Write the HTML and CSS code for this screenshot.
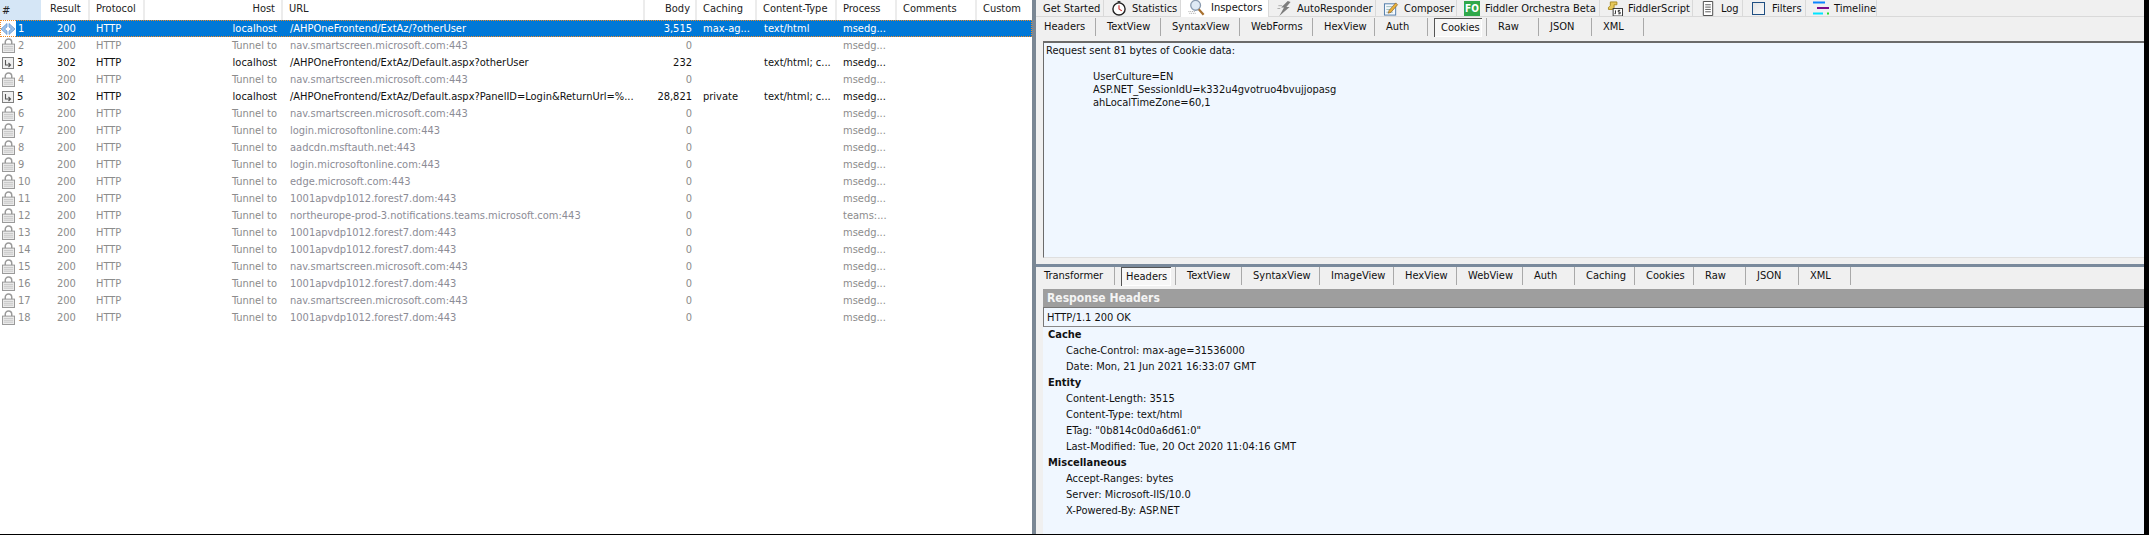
FILE: index.html
```html
<!DOCTYPE html>
<html lang="en">
<head>
<meta charset="utf-8">
<title>Fiddler</title>
<link rel="stylesheet" href="styles.css">
</head>
<body>
<svg class="defs" width="0" height="0" aria-hidden="true">
  <defs>
    <symbol id="lock" viewBox="0 0 14 16">
      <path d="M3.500 7V4.500C3.500 2.500 5 1 7 1s3.500 1.500 3.500 3.500V7" fill="none" stroke="#9a9a9a" stroke-width="1.600"/>
      <rect x=".5" y="6.500" width="13" height="9" fill="#ececec" stroke="#939393"/>
      <path d="M2 9h10M2 11h10M2 13h10" stroke="#c4c4c4"/>
    </symbol>
    <symbol id="redir" viewBox="0 0 12 12">
      <rect x=".5" y=".5" width="11" height="11" fill="#f0f0f0" stroke="#808080"/>
      <path d="M3.500 3v5h5M6.500 6l2 2-2 2" fill="none" stroke="#555" stroke-width="1.100"/>
    </symbol>
  </defs>
</svg>
<div class="app">
  <section class="sessions">
    <div class="row head">
      <div class="c num">#</div><div class="c res">Result</div><div class="c pro">Protocol</div><div class="c hos">Host</div><div class="c url">URL</div><div class="c bod">Body</div><div class="c cac">Caching</div><div class="c typ">Content-Type</div><div class="c prc">Process</div><div class="c com">Comments</div><div class="c cus">Custom</div>
    </div>
    <div class="row sel">
      <div class="c num"><svg class="ic-arrows" viewBox="0 0 16 12"><path d="M7 .5 1 6l6 5.500V8L4.500 6 7 4z" fill="#9fc3ea" stroke="#5a8fd0" stroke-width=".7"/><path d="M9 .5 15 6l-6 5.500V8l2.500-2L9 4z" fill="#9fc3ea" stroke="#5a8fd0" stroke-width=".7"/></svg><span>1</span></div><div class="c res">200</div><div class="c pro">HTTP</div><div class="c hos">localhost</div><div class="c url">/AHPOneFrontend/ExtAz/?otherUser</div><div class="c bod">3,515</div><div class="c cac">max-ag...</div><div class="c typ">text/html</div><div class="c prc">msedg...</div><div class="c com"></div><div class="c cus"></div>
    </div>
    <div class="row tun"><div class="c num"><svg class="ic-lock"><use href="#lock"/></svg><span>2</span></div><div class="c res">200</div><div class="c pro">HTTP</div><div class="c hos">Tunnel to</div><div class="c url">nav.smartscreen.microsoft.com:443</div><div class="c bod">0</div><div class="c cac"></div><div class="c typ"></div><div class="c prc">msedg...</div><div class="c com"></div><div class="c cus"></div></div>
    <div class="row"><div class="c num"><svg class="ic-redir"><use href="#redir"/></svg><span>3</span></div><div class="c res">302</div><div class="c pro">HTTP</div><div class="c hos">localhost</div><div class="c url">/AHPOneFrontend/ExtAz/Default.aspx?otherUser</div><div class="c bod">232</div><div class="c cac"></div><div class="c typ">text/html; c...</div><div class="c prc">msedg...</div><div class="c com"></div><div class="c cus"></div></div>
    <div class="row tun"><div class="c num"><svg class="ic-lock"><use href="#lock"/></svg><span>4</span></div><div class="c res">200</div><div class="c pro">HTTP</div><div class="c hos">Tunnel to</div><div class="c url">nav.smartscreen.microsoft.com:443</div><div class="c bod">0</div><div class="c cac"></div><div class="c typ"></div><div class="c prc">msedg...</div><div class="c com"></div><div class="c cus"></div></div>
    <div class="row"><div class="c num"><svg class="ic-redir"><use href="#redir"/></svg><span>5</span></div><div class="c res">302</div><div class="c pro">HTTP</div><div class="c hos">localhost</div><div class="c url">/AHPOneFrontend/ExtAz/Default.aspx?PanelID=Login&amp;ReturnUrl=%...</div><div class="c bod">28,821</div><div class="c cac">private</div><div class="c typ">text/html; c...</div><div class="c prc">msedg...</div><div class="c com"></div><div class="c cus"></div></div>
    <div class="row tun"><div class="c num"><svg class="ic-lock"><use href="#lock"/></svg><span>6</span></div><div class="c res">200</div><div class="c pro">HTTP</div><div class="c hos">Tunnel to</div><div class="c url">nav.smartscreen.microsoft.com:443</div><div class="c bod">0</div><div class="c cac"></div><div class="c typ"></div><div class="c prc">msedg...</div><div class="c com"></div><div class="c cus"></div></div>
    <div class="row tun"><div class="c num"><svg class="ic-lock"><use href="#lock"/></svg><span>7</span></div><div class="c res">200</div><div class="c pro">HTTP</div><div class="c hos">Tunnel to</div><div class="c url">login.microsoftonline.com:443</div><div class="c bod">0</div><div class="c cac"></div><div class="c typ"></div><div class="c prc">msedg...</div><div class="c com"></div><div class="c cus"></div></div>
    <div class="row tun"><div class="c num"><svg class="ic-lock"><use href="#lock"/></svg><span>8</span></div><div class="c res">200</div><div class="c pro">HTTP</div><div class="c hos">Tunnel to</div><div class="c url">aadcdn.msftauth.net:443</div><div class="c bod">0</div><div class="c cac"></div><div class="c typ"></div><div class="c prc">msedg...</div><div class="c com"></div><div class="c cus"></div></div>
    <div class="row tun"><div class="c num"><svg class="ic-lock"><use href="#lock"/></svg><span>9</span></div><div class="c res">200</div><div class="c pro">HTTP</div><div class="c hos">Tunnel to</div><div class="c url">login.microsoftonline.com:443</div><div class="c bod">0</div><div class="c cac"></div><div class="c typ"></div><div class="c prc">msedg...</div><div class="c com"></div><div class="c cus"></div></div>
    <div class="row tun"><div class="c num"><svg class="ic-lock"><use href="#lock"/></svg><span>10</span></div><div class="c res">200</div><div class="c pro">HTTP</div><div class="c hos">Tunnel to</div><div class="c url">edge.microsoft.com:443</div><div class="c bod">0</div><div class="c cac"></div><div class="c typ"></div><div class="c prc">msedg...</div><div class="c com"></div><div class="c cus"></div></div>
    <div class="row tun"><div class="c num"><svg class="ic-lock"><use href="#lock"/></svg><span>11</span></div><div class="c res">200</div><div class="c pro">HTTP</div><div class="c hos">Tunnel to</div><div class="c url">1001apvdp1012.forest7.dom:443</div><div class="c bod">0</div><div class="c cac"></div><div class="c typ"></div><div class="c prc">msedg...</div><div class="c com"></div><div class="c cus"></div></div>
    <div class="row tun"><div class="c num"><svg class="ic-lock"><use href="#lock"/></svg><span>12</span></div><div class="c res">200</div><div class="c pro">HTTP</div><div class="c hos">Tunnel to</div><div class="c url">northeurope-prod-3.notifications.teams.microsoft.com:443</div><div class="c bod">0</div><div class="c cac"></div><div class="c typ"></div><div class="c prc">teams:...</div><div class="c com"></div><div class="c cus"></div></div>
    <div class="row tun"><div class="c num"><svg class="ic-lock"><use href="#lock"/></svg><span>13</span></div><div class="c res">200</div><div class="c pro">HTTP</div><div class="c hos">Tunnel to</div><div class="c url">1001apvdp1012.forest7.dom:443</div><div class="c bod">0</div><div class="c cac"></div><div class="c typ"></div><div class="c prc">msedg...</div><div class="c com"></div><div class="c cus"></div></div>
    <div class="row tun"><div class="c num"><svg class="ic-lock"><use href="#lock"/></svg><span>14</span></div><div class="c res">200</div><div class="c pro">HTTP</div><div class="c hos">Tunnel to</div><div class="c url">1001apvdp1012.forest7.dom:443</div><div class="c bod">0</div><div class="c cac"></div><div class="c typ"></div><div class="c prc">msedg...</div><div class="c com"></div><div class="c cus"></div></div>
    <div class="row tun"><div class="c num"><svg class="ic-lock"><use href="#lock"/></svg><span>15</span></div><div class="c res">200</div><div class="c pro">HTTP</div><div class="c hos">Tunnel to</div><div class="c url">nav.smartscreen.microsoft.com:443</div><div class="c bod">0</div><div class="c cac"></div><div class="c typ"></div><div class="c prc">msedg...</div><div class="c com"></div><div class="c cus"></div></div>
    <div class="row tun"><div class="c num"><svg class="ic-lock"><use href="#lock"/></svg><span>16</span></div><div class="c res">200</div><div class="c pro">HTTP</div><div class="c hos">Tunnel to</div><div class="c url">1001apvdp1012.forest7.dom:443</div><div class="c bod">0</div><div class="c cac"></div><div class="c typ"></div><div class="c prc">msedg...</div><div class="c com"></div><div class="c cus"></div></div>
    <div class="row tun"><div class="c num"><svg class="ic-lock"><use href="#lock"/></svg><span>17</span></div><div class="c res">200</div><div class="c pro">HTTP</div><div class="c hos">Tunnel to</div><div class="c url">nav.smartscreen.microsoft.com:443</div><div class="c bod">0</div><div class="c cac"></div><div class="c typ"></div><div class="c prc">msedg...</div><div class="c com"></div><div class="c cus"></div></div>
    <div class="row tun"><div class="c num"><svg class="ic-lock"><use href="#lock"/></svg><span>18</span></div><div class="c res">200</div><div class="c pro">HTTP</div><div class="c hos">Tunnel to</div><div class="c url">1001apvdp1012.forest7.dom:443</div><div class="c bod">0</div><div class="c cac"></div><div class="c typ"></div><div class="c prc">msedg...</div><div class="c com"></div><div class="c cus"></div></div>
  </section>
  <div class="vsplit"></div>
  <section class="inspect">
    <nav class="maintabs">
      <div class="mt">Get Started</div>
      <div class="mt"><svg class="mi" viewBox="0 0 16 16"><circle cx="8" cy="8.500" r="6.500" fill="#fff" stroke="#222" stroke-width="1.500"/><path d="M8 4.500v4l3 2" fill="none" stroke="#c33" stroke-width="1.200"/><rect x="6.500" y="0" width="3" height="2" fill="#333"/></svg>Statistics</div>
      <div class="mt on"><svg class="mi big" viewBox="0 0 18 18"><circle cx="8" cy="6" r="5.500" fill="#dfeaf5" stroke="#8a9bb0" stroke-width="1.500"/><path d="M11.500 10.500l5.500 6" stroke="#a8702f" stroke-width="2.500"/><path d="M0 13h8M1 15h7" stroke="#999" stroke-dasharray="1 1"/></svg>Inspectors</div>
      <div class="mt"><svg class="mi" viewBox="0 0 16 16"><path d="M12 0 5 7h3l-5 9 11-9.500h-3.500L15 1z" fill="#7d7d7d"/><path d="M2 5h4M1 8h3" stroke="#aaa"/></svg>AutoResponder</div>
      <div class="mt"><svg class="mi" viewBox="0 0 16 16"><rect x="1" y="3" width="12" height="12" fill="#f4f8fc" stroke="#4d79a8"/><path d="M3 6h6M3 9h5M3 12h7" stroke="#9bb"/><path d="M6 10 13 2l2 2-7 8-3 1z" fill="#e8b23a" stroke="#8a5a20" stroke-width=".7"/></svg>Composer</div>
      <div class="mt"><span class="fo">FO</span>Fiddler Orchestra Beta</div>
      <div class="mt"><svg class="mi" viewBox="0 0 16 16"><path d="M3 1h7v3H7v3c0 1-1 2-2 2H1V7c0-1 2-1 2-2V1z" fill="#e6c75a" stroke="#a98a20"/><rect x="6" y="8" width="10" height="8" fill="#fff" stroke="#333"/><path d="M8.500 10v3.500H7.500M13.500 10h-2v1.800h2v1.800h-2" fill="none" stroke="#222"/></svg>FiddlerScript</div>
      <div class="mt"><svg class="mi" viewBox="0 0 16 16"><path d="M3 .5h10v15H3z" fill="#fff" stroke="#444"/><path d="M5 4h6M5 6.500h6M5 9h6M5 11.500h6" stroke="#555"/></svg>Log</div>
      <div class="mt"><span class="chk"></span>Filters</div>
      <div class="mt"><svg class="mi" viewBox="0 0 16 14"><path d="M0 1h12" stroke="#0a84ff" stroke-width="2"/><path d="M4 6.500h12" stroke="#7a0a8a" stroke-width="2"/><path d="M0 12h10" stroke="#00e5ff" stroke-width="2"/><path d="M14 12h2" stroke="#22dd22" stroke-width="2"/></svg>Timeline</div>
    </nav>
    <nav class="subtabs reqtabs">
      <div class="st">Headers</div><div class="st">TextView</div><div class="st">SyntaxView</div><div class="st">WebForms</div><div class="st">HexView</div><div class="st">Auth</div><div class="st act">Cookies</div><div class="st">Raw</div><div class="st">JSON</div><div class="st">XML</div>
    </nav>
    <div class="cookies">
      <p class="line">Request sent 81 bytes of Cookie data:</p>
      <p class="line blank"></p>
      <p class="line ind">UserCulture=EN</p>
      <p class="line ind">ASP.NET_SessionIdU=k332u4gvotruo4bvujjopasg</p>
      <p class="line ind">ahLocalTimeZone=60,1</p>
    </div>
    <div class="hsplit"></div>
    <nav class="subtabs restabs">
      <div class="st">Transformer</div><div class="st act">Headers</div><div class="st">TextView</div><div class="st">SyntaxView</div><div class="st">ImageView</div><div class="st">HexView</div><div class="st">WebView</div><div class="st">Auth</div><div class="st">Caching</div><div class="st">Cookies</div><div class="st">Raw</div><div class="st">JSON</div><div class="st">XML</div>
    </nav>
    <div class="response">
      <div class="bar">Response Headers</div>
      <div class="status">HTTP/1.1 200 OK</div>
      <div class="tree">
        <div class="grp">Cache</div>
        <div class="kv">Cache-Control: max-age=31536000</div>
        <div class="kv">Date: Mon, 21 Jun 2021 16:33:07 GMT</div>
        <div class="grp">Entity</div>
        <div class="kv">Content-Length: 3515</div>
        <div class="kv">Content-Type: text/html</div>
        <div class="kv">ETag: "0b814c0d0a6d61:0"</div>
        <div class="kv">Last-Modified: Tue, 20 Oct 2020 11:04:16 GMT</div>
        <div class="grp">Miscellaneous</div>
        <div class="kv">Accept-Ranges: bytes</div>
        <div class="kv">Server: Microsoft-IIS/10.0</div>
        <div class="kv">X-Powered-By: ASP.NET</div>
      </div>
    </div>
  </section>
</div>
</body>
</html>
```
FILE: styles.css
```css
* { box-sizing: border-box; }
html, body { margin: 0; padding: 0; background: #000; }
body {
  width: 2149px;
  height: 535px;
  overflow: hidden;
  font-family: "DejaVu Sans", "Liberation Sans", sans-serif;
  font-stretch: condensed;
  font-size: 11px;
  color: #111;
}
.defs { position: absolute; }
.app { display: flex; width: 2144px; height: 534px; background: #f0f0f0; }
.sessions { width: 1032px; flex: none; background: #fff; }
.vsplit { width: 4px; flex: none; background: #7a8794; }
.inspect { flex: 1; min-width: 0; display: flex; flex-direction: column; }

/* session list */
.row {
  display: grid;
  grid-template-columns: 41px 49px 55px 138px 362px 52px 60px 80px 60px 80px 55px;
  height: 17px;
  line-height: 17px;
  white-space: nowrap;
}
.c { overflow: hidden; padding-left: 5px; color: inherit; }
.head { height: 20px; line-height: 17px; color: #222; }
.head .c { border-right: 2px solid #ececec; padding-left: 6px; }
.head .num { background: #d5e6f6; border-right: 0; padding-left: 2px; }
.head .res { padding-left: 9px; }
.head .hos { padding-right: 6px; }
.head .url { padding-left: 6px; }
.head .bod { padding-right: 4px; }
.head .cus { border-right: 0; }
.hos, .bod { text-align: right; padding-right: 6px; }
.res { padding-left: 16px; }
.pro { padding-left: 6px; }
.url { padding-left: 7px; overflow: visible; }
.cac { padding-left: 6px; }
.typ { padding-left: 7px; }
.prc { padding-left: 6px; }
.num { display: flex; align-items: center; padding-left: 2px; gap: 3px; overflow: visible; }
.row > .bod { padding-right: 5px; }
.tun { color: #8c8c8c; }
.tun .url { color: #8c8c96; }
.sel { background: #0078d7; color: #fff; outline: 1px dotted #f08a24; outline-offset: -1px; }
.sel .num { background: #fff; padding: 0; gap: 0; }
.sel .num span { background: #0078d7; flex: 1; height: 17px; padding-left: 2px; }
.ic-lock { width: 13px; height: 15px; flex: none; }
.ic-redir { width: 12px; height: 12px; flex: none; margin-left: 0; }
.ic-arrows { width: 16px; height: 12px; flex: none; }

/* main tabs */
.maintabs {
  display: grid;
  grid-template-columns: 68px 77px 88px 107px 81px 143px 93px 50px 63px 71px;
  height: 17px;
  line-height: 16px;
  border-bottom: 1px solid #d9d9d9;
  flex: none;
}
.mt { display: flex; align-items: center; gap: 5px; padding-left: 7px; border-right: 1px solid #d9d9d9; white-space: nowrap; }
.mt.on { background: #fff; gap: 6px; height: 17px; align-items: flex-start; }
.mi { width: 16px; height: 15px; flex: none; }
.mi.big { width: 17px; height: 16px; }
.fo { width: 16px; height: 15px; background: #2fa84a; color: #fff; font-weight: 700; font-size: 10px; line-height: 15px; text-align: center; flex: none; }
.chk { width: 13px; height: 13px; border: 1px solid #1f4f82; background: linear-gradient(135deg, #e4e4e4, #fafafa); flex: none; margin: 0 2px; }

/* sub tabs */
.subtabs { display: grid; flex: none; }
.st { padding-left: 11px; border-right: 1px solid #a9a9a9; white-space: nowrap; }
.reqtabs {
  grid-template-columns: 60px 65px 79px 73px 62px 53px 59px 52px 53px 52px;
  height: 24px;
  padding: 1px 0 0 0;
  line-height: 18px;
  align-items: start;
}
.reqtabs .st { height: 18px; }
.reqtabs .st:first-child { padding-left: 8px; }
.reqtabs .act { background: #f7f7f7; box-shadow: inset 1px 1px 0 #555, inset -1px -1px 0 #fff; margin: 0 5px 0 6px; padding-left: 7px; padding-top: 1px; border-right: 0; height: 19px; }
.reqtabs .act + .st { box-shadow: -1px 0 0 #a9a9a9; }
.cookies {
  height: 217px;
  margin-left: 7px;
  background: #f0f7ff;
  border-top: 2px solid #6b6b6b;
  border-left: 1px solid #6b6b6b;
  border-bottom: 1px solid #dfdfdf;
  padding: 1px 0 0 2px;
  flex: none;
}
.line { margin: 0; height: 13px; line-height: 13px; white-space: nowrap; }
.ind { padding-left: 47px; }
.hsplit { height: 3px; margin: 6px 0 0 0; background: #7a8a9c; flex: none; }
.restabs {
  grid-template-columns: 79px 61px 66px 78px 74px 63px 66px 52px 60px 59px 52px 53px 52px;
  height: 22px;
  line-height: 18px;
  align-items: start;
}
.restabs .st { height: 18px; }
.restabs .st:first-child { padding-left: 8px; }
.restabs .act { background: #f7f7f7; box-shadow: inset 1px 1px 0 #555, inset -1px -1px 0 #fff; margin: 0 5px 0 6px; padding-left: 5px; padding-top: 1px; border-right: 0; height: 19px; }
.restabs .act + .st { box-shadow: -1px 0 0 #a9a9a9; }
.response { flex: 1; margin-left: 7px; background: #f0f7ff; display: flex; flex-direction: column; }
.bar { height: 18px; line-height: 18px; background: #9e9e9e; color: #f4f4f4; font-weight: 700; font-size: 12px; padding-left: 4px; flex: none; }
.status { height: 20px; line-height: 19px; border-top: 1px solid #777; border-bottom: 1px solid #888; border-left: 1px solid #777; padding-left: 3px; flex: none; }
.tree { padding: 0 0 0 5px; }
.grp { height: 16px; line-height: 16px; font-weight: 700; }
.kv { height: 16px; line-height: 16px; padding-left: 18px; white-space: nowrap; }
```
